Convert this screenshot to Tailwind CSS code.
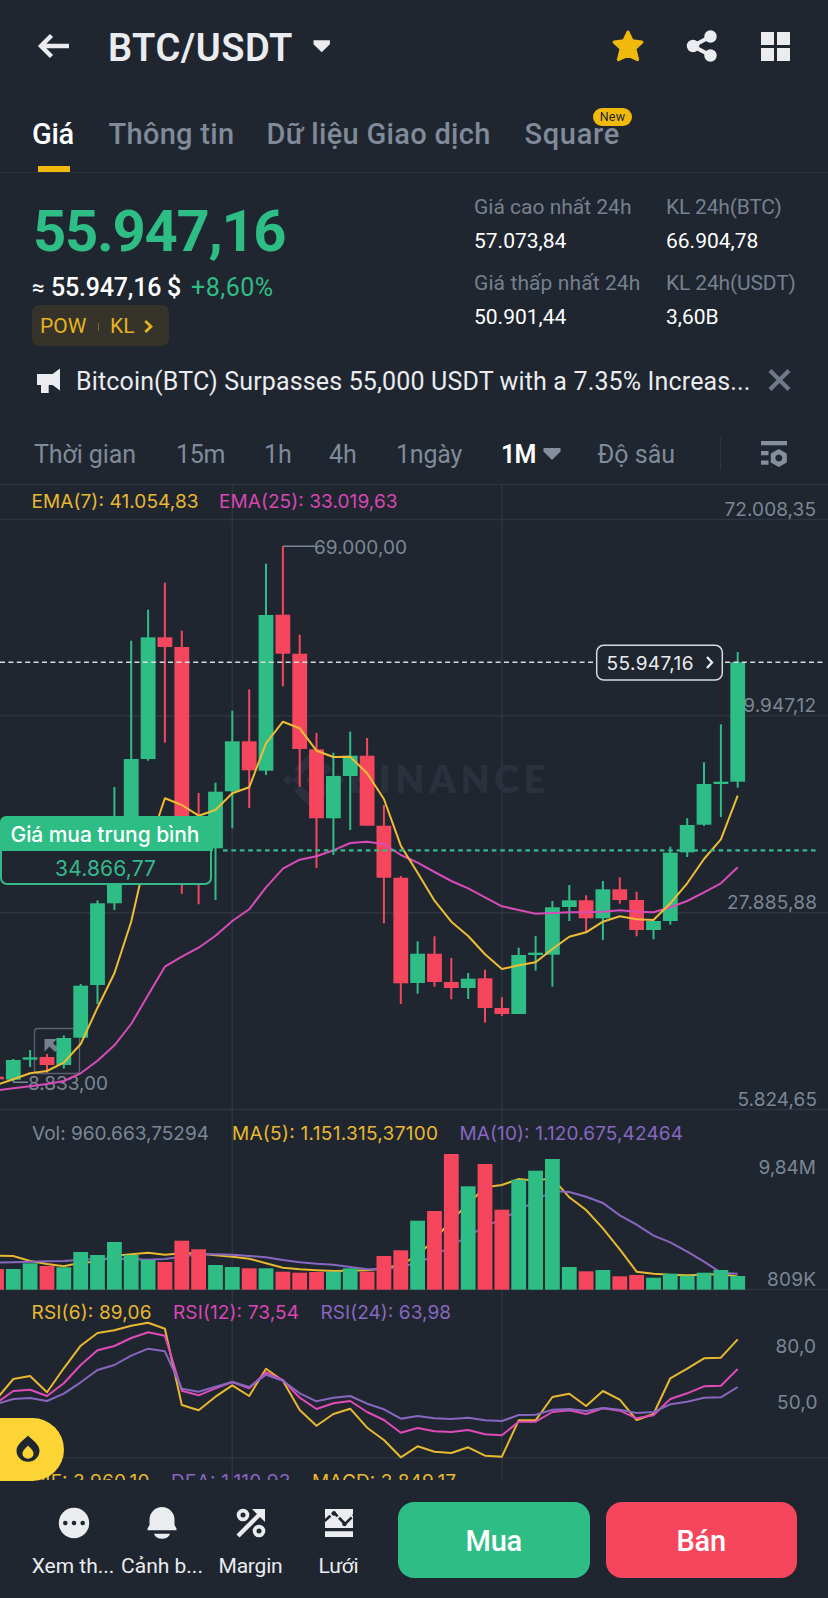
<!DOCTYPE html>
<html lang="vi">
<head>
<meta charset="utf-8">
<title>BTC/USDT</title>
<script src="https://cdn.jsdelivr.net/npm/@tailwindcss/browser@4"></script>
</head>
<body class="bg-[#1f2630]">
<div class="w-[828px] h-[1598px] flex flex-col overflow-hidden bg-[#1f2630] font-['Roboto',sans-serif] text-[#eaecef] whitespace-nowrap">

  <!-- Header -->
  <header class="h-[92px] shrink-0 flex items-center pl-[36px] pr-[38px]">
    <svg class="w-[34px] h-[28px]" viewBox="0 0 34 28" fill="none" stroke="#eaecef" stroke-width="4.400"><path d="M33 14H5M15.500 3.500 5 14l10.500 10.500"/></svg>
    <h1 class="ml-[38px] mt-[4px] text-[38px] leading-none font-semibold tracking-[0.500px]">BTC/USDT</h1>
    <svg class="ml-[20px] w-[18px] h-[14px]" viewBox="0 0 18 14" fill="#eaecef"><path d="M.5 1.200h16.400v4L8.700 13.200.5 5.200z"/></svg>
    <div class="ml-auto flex items-center">
      <svg class="w-[34px] h-[34px]" viewBox="0 0 34 34" fill="#f0b90b" stroke="#f0b90b" stroke-width="3" stroke-linejoin="round"><path d="M17 3l4.100 8.700 9.800 1.400-7 6.600 2.700 11L17 26.400 7.400 30.700l2.700-11-7-6.600 9.800-1.400z"/></svg>
      <svg class="ml-[41px] w-[32px] h-[34px]" viewBox="0 0 32 34" fill="#eaecef"><path d="M24.500 7.500 7 17l17.500 9.500" fill="none" stroke="#eaecef" stroke-width="4"/><circle cx="24.500" cy="7.500" r="6.200"/><circle cx="7" cy="17" r="6.200"/><circle cx="24.500" cy="26.500" r="6.200"/></svg>
      <div class="ml-[43px] grid grid-cols-2 gap-[3px] w-[29px]">
        <i class="h-[13px] bg-[#eaecef]"></i><i class="h-[13px] bg-[#eaecef]"></i><i class="h-[13px] bg-[#eaecef]"></i><i class="h-[13px] bg-[#eaecef]"></i>
      </div>
    </div>
  </header>

  <!-- Tabs -->
  <nav class="h-[81px] shrink-0 flex items-center pt-[5px] border-b border-[#2b323d] text-[29px] leading-none font-medium tracking-[0.300px] text-[#808a99]">
    <span class="relative w-[76px] pl-[32px] text-white tracking-[-0.300px]">Giá<i class="absolute left-[38px] top-[46px] w-[32px] h-[6px] bg-[#f0b90b]"></i></span>
    <span class="w-[158px] pl-[32.500px]">Thông tin</span>
    <span class="w-[257px] pl-[32.500px]">Dữ liệu Giao dịch</span>
    <span class="relative pl-[33.500px] tracking-[0.700px]">Square<b class="absolute left-[102px] top-[-12px] w-[39px] h-[18px] rounded-full bg-[#f0b90b] text-[#1f2630] text-[12.500px] leading-[18px] tracking-[0.200px] font-normal text-center">New</b></span>
  </nav>

  <!-- Ticker -->
  <section class="h-[181px] shrink-0 flex pl-[32px]">
    <div class="w-[442px] pt-[29px] flex flex-col items-start">
      <div class="ml-px text-[58px] leading-none font-bold tracking-[-1.300px] text-[#2ebd85]">55.947,16</div>
      <div class="mt-[15px] flex text-[25px] leading-[26px] font-medium text-white tracking-[-0.200px]"><span class="w-[19px] text-[22px]">≈</span><span class="w-[116px]">55.947,16</span><span class="w-[24px]">$</span><span class="font-normal tracking-[0.500px] text-[#2ebd85]">+8,60%</span></div>
      <div class="mt-[4px] w-[137px] h-[41px] rounded-[7px] bg-[#36332b] flex items-center pt-[2px] pl-[8px] text-[21px] leading-none text-[#e5b220]">
        <span class="w-[58px]">POW</span><i class="w-px h-[8px] bg-[#7d6624]"></i><span class="ml-[11px] w-[31px]">KL</span>
        <svg class="ml-[3px] w-[9px] h-[13px]" viewBox="0 0 9 13" fill="none" stroke="#e5b220" stroke-width="2.800"><path d="M1.200 1 7 6.500l-5.800 5.500"/></svg>
      </div>
    </div>
    <div class="pt-[17px] grid grid-cols-[192px_150px] auto-rows-max text-[21px] text-white">
      <span class="leading-[34px] text-[#76808e]">Giá cao nhất 24h</span><span class="leading-[34px] text-[#76808e] tracking-[-0.200px]">KL 24h(BTC)</span>
      <span class="leading-[34px]">57.073,84</span><span class="leading-[34px]">66.904,78</span>
      <span class="mt-[8px] leading-[34px] text-[#76808e] tracking-[0.100px]">Giá thấp nhất 24h</span><span class="mt-[8px] leading-[34px] text-[#76808e] tracking-[-0.150px]">KL 24h(USDT)</span>
      <span class="leading-[34px]">50.901,44</span><span class="leading-[34px]">3,60B</span>
    </div>
  </section>

  <!-- Notice -->
  <section class="h-[53px] shrink-0 flex items-center pl-[36px]">
    <svg class="w-[25px] h-[27px]" viewBox="0 0 25 27" fill="#eaecef"><path d="M1 7h15.500L24 1.500v22L16.500 18h-3.800v8H5v-8H1z"/></svg>
    <span class="ml-[15px] mt-px w-[692px] text-[25px] leading-none tracking-[0.150px]">Bitcoin(BTC) Surpasses 55,000 USDT with a 7.35% Increas...</span>
    <svg class="w-[23px] h-[22px] -mt-[2px]" viewBox="0 0 23 22" fill="none" stroke="#707987" stroke-width="4.200"><path d="M2 1.500l19 19M21 1.500l-19 19"/></svg>
  </section>

  <!-- Intervals -->
  <section class="h-[77px] shrink-0 pt-[17px] flex items-center text-[25px] leading-none text-[#808a99]">
    <span class="ml-[34px] w-[142px] tracking-[-0.100px]">Thời gian</span>
    <span class="w-[88px] tracking-[-0.300px]">15m</span>
    <span class="w-[65px]">1h</span>
    <span class="w-[67px]">4h</span>
    <span class="w-[105px] tracking-[-0.200px]">1ngày</span>
    <span class="w-[42px] text-white font-semibold tracking-[-0.800px]">1M</span>
    <svg class="w-[18px] h-[14px]" viewBox="0 0 18 14" fill="#848e9c"><path d="M.5 1h17v3.500L9 13 .5 4.500z"/></svg>
    <span class="ml-[36.500px] w-[122px]">Độ sâu</span>
    <i class="w-px h-[32px] bg-[#2f3641]"></i>
    <svg class="ml-[39.500px] mt-[-3px] w-[28px] h-[28px]" viewBox="0 0 28 28" fill="#848e9c"><path d="M1 2h26v4.200H1zM1 12h7.500v4.200H1zM1 21.500h7.500v4.200H1z"/><path fill-rule="evenodd" d="M18.800 10l8 4.500v9l-8 4.500-8-4.500v-9zM18.800 15.500a3.500 3.500 0 1 0 .01 0z"/></svg>
  </section>

  <!-- Chart -->
  <main class="relative h-[996px] shrink-0">
    <svg class="block w-[828px] h-[996px] font-['Inter',sans-serif]" viewBox="0 484 828 996" font-size="19">
      <g stroke="#2e353f" stroke-width="1.500">
        <path d="M0 484.500H828M0 519.500H828M0 715.700H828M0 912.700H828M0 1109.500H828M0 1289.500H828M0 1457.700H828M232.300 484V1480M501.800 484V1480"/>
      </g>
      <g fill="#2a313c">
        <path d="M297.500 774.500l5 5-5 5-5-5zM283 780l5-5 5 5-5 5zM313 750l19 19-6.500 6.500L313 763l-12.500 12.500L294 769zM313 810l-19-19 6.500-6.500L313 797l12.500-12.500L332 791zM313 772.500l7.500 7.500-7.500 7.500-7.500-7.500zM338 773.500l6.500 6.500-6.500 6.500-6.500-6.500z"/>
        <text x="349" y="793.300" font-family="Lato, sans-serif" font-weight="800" font-size="37.500" textLength="196">BINANCE</text>
      </g>
      <g fill="#7d8694">
        <text x="724.500" y="515.700" textLength="91.500">72.008,35</text>
        <text x="731" y="712.300" textLength="85">49.947,12</text>
        <text x="727" y="909" textLength="90">27.885,88</text>
        <text x="737.500" y="1105.500" textLength="79.500">5.824,65</text>
        <text x="758.500" y="1173.700" textLength="57.500">9,84M</text>
        <text x="767" y="1285.500" textLength="49">809K</text>
        <text x="775.500" y="1352.500" textLength="40.500">80,0</text>
        <text x="777" y="1409" textLength="40.500">50,0</text>
        <text x="314" y="553.500" textLength="93">69.000,00</text>
        <text x="32" y="1140.300" textLength="177">Vol: 960.663,75294</text>
      </g>
      <g fill="#e8b830">
        <text x="31.500" y="508" textLength="167">EMA(7): 41.054,83</text>
        <text x="232" y="1140.300" textLength="206">MA(5): 1.151.315,37100</text>
        <text x="31.500" y="1319" textLength="120">RSI(6): 89,06</text>
        <text x="31.500" y="1487.500" textLength="118">DIF: 3.960,10</text>
        <text x="312" y="1487.500" textLength="144">MACD: 2.849,17</text>
      </g>
      <g fill="#d946b4">
        <text x="219" y="508" textLength="178.500">EMA(25): 33.019,63</text>
        <text x="173" y="1319" textLength="126">RSI(12): 73,54</text>
      </g>
      <g fill="#8767bf">
        <text x="459.500" y="1140.300" textLength="223.500">MA(10): 1.120.675,42464</text>
        <text x="320.500" y="1319" textLength="130.500">RSI(24): 63,98</text>
        <text x="171" y="1487.500" textLength="119.500">DEA: 1.110,93</text>
      </g>

      <rect x="34.500" y="1028.500" width="45" height="45" rx="3" fill="none" stroke="#5a616c" stroke-width="1.300"/>
      <path d="M44.500 1039h12.500l-4 4 5.500 5.500-3.500 3.500-5.500-5.500-5 5z" fill="#76808e"/>

      <g id="volLines" fill="none" stroke-width="2"></g>
      <g id="bars"></g>
      <g id="candles"></g>
      <path d="M283 546.300H315M13 1082.300H28" stroke="#7d8694" stroke-width="1.500"/>
      <text x="28" y="1090" textLength="80" fill="#7d8694">8.833,00</text>
      <g id="lines" fill="none" stroke-width="2" stroke-linejoin="round"></g>

      <path d="M0 662.300H596M725 662.300H823" stroke="#d5d9e0" stroke-width="1.500" stroke-dasharray="5 3.400"/>
      <path d="M223 850.300H819" stroke="#35b98a" stroke-width="2.200" stroke-dasharray="4.600 3.800"/>

      <rect x="596.700" y="645.300" width="125.600" height="34.700" rx="7" fill="#1f2630" stroke="#d5d9e0" stroke-width="1.500"/>
      <text x="606.500" y="669.900" fill="#eaecef" textLength="87">55.947,16</text>
      <path d="M707 657l5 5.500-5 5.500" fill="none" stroke="#eaecef" stroke-width="2.300"/>

      <rect x="1" y="830" width="210" height="54" rx="6" fill="#1f2630" stroke="#35b98a" stroke-width="2"/>
      <path d="M0 851V822a6 6 0 0 1 6-6H213V851z" fill="#2ebd85"/>
      <text x="10.500" y="841.800" font-size="21" font-weight="500" fill="#fff" textLength="189">Giá mua trung bình</text>
      <text x="55" y="875.800" font-size="21" fill="#35b98a" textLength="101">34.866,77</text>
    </svg>
    <div class="absolute left-0 bottom-[-1px] w-[63.500px] h-[63px] rounded-r-full bg-[#fcd535]">
      <svg class="absolute left-[15.500px] top-[16px] w-[24px] h-[28px]" viewBox="0 0 24 28"><path d="M12 1.500C16 6 23.500 10 23.500 16.800a11.500 11 0 0 1-23 0C.5 10 8 6 12 1.500z" fill="#1f2630"/><path d="M12 11.500c2 2.500 5.500 4.500 5.500 8.200a5.500 5 0 0 1-11 0c0-3.700 3.500-5.700 5.500-8.200z" fill="#fcd535"/></svg>
    </div>
  </main>

  <!-- Bottom bar -->
  <footer class="relative h-[118px] shrink-0 flex pl-[30px]">
    <div class="w-[368px] pt-[27px] flex text-[21px] leading-none">
      <div class="w-[88px] flex flex-col items-center">
        <svg class="w-[32px] h-[32px]" viewBox="0 0 32 32"><circle cx="16" cy="16" r="15.200" fill="#eaecef"/><g fill="#1f2630"><circle cx="7.300" cy="16" r="2.300"/><circle cx="16" cy="16" r="2.300"/><circle cx="24.700" cy="16" r="2.300"/></g></svg>
        <span class="mt-[17px] -ml-[2px]">Xem th...</span>
      </div>
      <div class="w-[88px] flex flex-col items-center">
        <svg class="w-[32px] h-[32px]" viewBox="0 0 32 32" fill="#eaecef"><path d="M3.500 12.500a12.500 12.500 0 0 1 25 0V18l2 3.500v1.800H1.500v-1.800l2-3.500zM8 26.800h16c-1 3.300-4 5-8 5s-7-1.700-8-5z"/></svg>
        <span class="mt-[17px]">Cảnh b...</span>
      </div>
      <div class="w-[89px] flex flex-col items-center">
        <svg class="w-[32px] h-[32px]" viewBox="0 0 32 32" fill="none" stroke="#eaecef"><circle cx="8" cy="8" r="4.400" stroke-width="3.800"/><circle cx="24" cy="24" r="4.400" stroke-width="3.800"/><path d="M3 29 25 7" stroke-width="4.400"/><path d="M17 2h13v13z" fill="#eaecef" stroke="none"/></svg>
        <span class="mt-[17px] tracking-[-0.200px]">Margin</span>
      </div>
      <div class="w-[87px] flex flex-col items-center">
        <svg class="w-[32px] h-[32px]" viewBox="0 0 32 32"><path d="M2 2h28v19H2zM2 24.200h28V30H2z" fill="#eaecef"/><path d="M1.500 14 11 5.500l11 11.500L31 8" fill="none" stroke="#1f2630" stroke-width="2.600" stroke-dasharray="8 2"/><circle cx="11" cy="6.500" r="2.300" fill="#1f2630"/><circle cx="21.500" cy="17" r="2.300" fill="#1f2630"/></svg>
        <span class="mt-[17px] tracking-[-0.300px]">Lưới</span>
      </div>
    </div>
    <div class="pt-[22px] flex gap-[16.500px] text-[29px] leading-[78px] font-medium text-white text-center tracking-[-0.200px]">
      <div class="w-[191.500px] h-[76px] rounded-[16px] bg-[#2ebd85]">Mua</div>
      <div class="w-[190.500px] h-[76px] rounded-[16px] bg-[#f6465d]">Bán</div>
    </div>
  </footer>
</div>

<script>
const X0 = 13.3, STEP = 16.847, GREEN = '#2ebd85', RED = '#f6465d';
// [up, high, bodyTop, bodyBottom, low], first entry lies one step left of X0
const candles = [
[0,1076.7,1076.7,1079.3,1079.3],[1,1059,1060,1079.7,1081.7],[1,1050,1057.3,1059.7,1067],[0,1054,1057,1065,1072.7],[1,1035.3,1038,1065,1068.7],[1,984,985.7,1037.7,1037.7],
[1,900.3,903.3,985,1004],[1,787,850,903.3,910],[1,640.7,759,850,850],[1,609.7,637.3,759,760.7],[0,582.7,637.3,647,742.7],
[0,630.7,647,860,893.7],[0,793,830,850,904.3],[1,782.7,791.7,848.3,900],[1,710.7,741.3,791.3,828.3],[0,689.3,741.3,770.3,808],
[1,563.7,615,770.7,775],[0,546,614.7,653.7,686.3],[0,634.7,653.7,749,786.7],[0,733,749.3,818.3,868],[1,752.7,776,818.3,855],
[1,731.7,755.7,776,830],[0,738,755.7,825.7,825.7],[0,805,825.7,877.7,923.3],[0,876,877.7,983.3,1004],[1,941.3,953.7,983,993.7],
[0,936.3,953.7,982,986.7],[0,958,982,988,999.3],[1,973,978.7,988,999],[0,969.7,978.3,1008,1022.7],[0,997.3,1008,1014,1016],
[1,947.7,955,1014,1014],[1,936,952.7,955,970.7],[1,901,907.3,954.7,986.7],[1,885,900.3,907,921],[0,895.3,900.3,918.3,931.7],
[1,881,889.3,918.3,940],[0,877.3,889.3,900,903.7],[0,891.7,900,930,936.3],[1,921,921,930,939.3],[1,846.7,852.7,921,924.7],
[1,818.3,825,852.3,857],[1,762.3,784,824.7,826],[1,724.3,781.7,784,817],[1,652,662.3,781.7,787.7]];
const vol = [1269,1269,1263.3,1266,1267.3,1252,1255,1242,1255,1260,1262,1240.7,1249.3,1265,1267,1268.3,1268.3,1271.7,1272.7,1272,1271.7,1268.3,1271.7,1256,1250.3,1220.7,1211,1154,1186.3,1164,1209.7,1179.7,1170.7,1159,1267,1271.3,1270,1276.3,1275,1277.7,1273.7,1275.7,1272.7,1270,1276];
const ma5 = [1255.7,1256,1261,1264,1266.3,1262.7,1261.7,1256,1254.3,1252.7,1254.7,1253.3,1253.5,1255.3,1256.7,1258.7,1263.3,1267.7,1269.3,1270.3,1271,1270.7,1270.3,1268.3,1265,1255,1240,1220,1204,1187.3,1185,1179,1180.7,1178,1197.3,1210,1228.3,1249.3,1271.7,1273.7,1274.7,1275.3,1274.7,1274,1276.5];
const ma10 = [1262.7,1262.3,1261.7,1261.3,1261,1259.7,1259,1258.7,1259,1259.7,1259,1256.7,1254,1254.3,1254.7,1256,1257.3,1260,1262.3,1263.7,1264.7,1267,1269.3,1269.3,1266.7,1263,1255.7,1246,1236,1226.7,1219,1210.7,1200.7,1191,1192,1196.7,1203,1215.3,1224.7,1235.7,1242.3,1251.7,1261.7,1272.7,1273.7];
const ema7 = [1085,1079.3,1073.3,1071,1062.7,1044,1007.7,973.3,921.7,848,798.3,805,815.7,810,793.3,787.3,743.3,721.7,728.3,750.7,757,756.7,773.3,799,845.7,872.7,900.7,921.7,936,954.3,969,965.3,962.3,949,936.7,932.3,921.7,916.3,919.3,920,903.3,883.3,859,839.3,795.7];
const ema25 = [1090.5,1088.3,1086.3,1084,1081,1073.3,1060.7,1045.3,1024,995,966.7,956.7,947.7,935.7,921,909.3,887.3,868.7,859.7,856.3,850.3,843,841.7,844,855,862.7,872,881,888.3,897.3,906.3,910,913.7,913,912.3,912.3,911.7,910.3,911.7,912.3,907.3,901,892.3,883.3,867.3];
const rsi6 = [1399,1379,1376,1392.3,1368.3,1345.7,1333,1330.3,1325.7,1322.7,1328.7,1405,1410.3,1396.7,1385.3,1396,1368.7,1380.7,1410,1425.7,1414,1408.7,1427.7,1440,1457.3,1446.3,1451.7,1453,1447.3,1455.7,1456.7,1420.3,1420.3,1397,1393.7,1406,1391,1399.7,1420,1414,1378.3,1368.7,1358.3,1357.7,1339.3];
const rsi12 = [1403,1391,1389.7,1396,1383.3,1365,1350.3,1346,1338,1332.3,1335.7,1390.7,1395.3,1388.3,1382,1388.3,1372.3,1380,1397.7,1409,1403.3,1401,1412,1420,1432.7,1428,1431.3,1432,1430,1434.3,1435.3,1421.7,1421.7,1412,1410.3,1414,1408.3,1410.7,1418.3,1415.3,1399,1393.3,1386.3,1385.7,1369];
const rsi24 = [1404,1399,1398,1401,1393.7,1382.3,1370,1365,1355.7,1348.7,1351.3,1388.7,1391.7,1386.7,1382,1387,1374.7,1380.7,1393.3,1401.3,1397.7,1396,1403.7,1409.3,1418.7,1416,1418.3,1419,1417.7,1420.3,1421,1415,1414.7,1409.7,1409,1411,1408,1409.7,1413,1412,1404.3,1401.7,1397.7,1397.3,1387];
const x = i => X0 + STEP * (i - 1);
const line = (d, c) => `<path d="M${d.map((y, i) => x(i).toFixed(1) + ' ' + y).join('L')}" stroke="${c}"/>`;
const put = (id, s) => { document.getElementById(id).innerHTML = s; };
put('candles', candles.map(([u, h, t, b, l], i) => {
  const c = u ? GREEN : RED;
  return `<rect x="${(x(i) - 1).toFixed(1)}" y="${h}" width="2" height="${l - h}" fill="${c}"/><rect x="${(x(i) - 7.4).toFixed(1)}" y="${t}" width="14.8" height="${b - t}" fill="${c}"/>`;
}).join(''));
put('bars', vol.map((t, i) => `<rect x="${(x(i) - 7.4).toFixed(1)}" y="${t}" width="14.8" height="${1289.7 - t}" fill="${candles[i][0] ? GREEN : RED}"/>`).join(''));
put('volLines', line(ma5, '#e8b830') + line(ma10, '#8767bf'));
put('lines', line(ema25, '#d94bb8') + line(ema7, '#efbd35') + line(rsi6, '#e8b830') + line(rsi12, '#e04bb8') + line(rsi24, '#8767bf'));
</script>
</body>
</html>
